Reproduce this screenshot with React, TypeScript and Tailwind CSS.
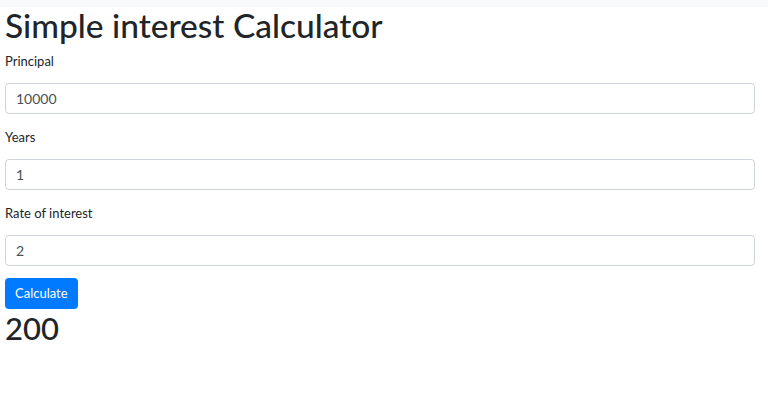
import React, { useState } from 'react';

const fields = [
  { key: 'principal', label: 'Principal' },
  { key: 'years', label: 'Years' },
  { key: 'rate', label: 'Rate of interest' },
] as const;

type Key = (typeof fields)[number]['key'];

const App = () => {
  const [values, setValues] = useState<Record<Key, string>>({
    principal: '10000',
    years: '1',
    rate: '2',
  });
  const [result, setResult] = useState<number | null>(200);

  const calculate = () => {
    const p = parseFloat(values.principal) || 0;
    const n = parseFloat(values.years) || 0;
    const r = parseFloat(values.rate) || 0;
    setResult((p * n * r) / 100);
  };

  return (
    <div className="min-h-screen bg-white text-[#212529]" style={{ fontFamily: 'Lato, "Open Sans", sans-serif' }}>
      <div className="h-[7px] bg-[#f8f9fa]" />
      <div className="pl-[5px] pr-[13px]">
        <h1 className="text-[33.5px] leading-[36px] font-medium mb-2">Simple interest Calculator</h1>

        {fields.map((f) => (
          <div key={f.key} className="mb-[13px]">
            <label className="block text-[13px] leading-[20px] mb-[12px]">{f.label}</label>
            <input
              type="text"
              value={values[f.key]}
              onChange={(e) => setValues({ ...values, [f.key]: e.target.value })}
              className="block w-full h-[31px] px-[10px] text-[14px] text-[#495057] border border-[#ced4da] rounded-[4px] outline-none"
            />
          </div>
        ))}

        <button
          onClick={calculate}
          className="-mt-px h-[31px] px-[10px] text-[13px] text-white bg-[#007bff] rounded-[4px]"
        >
          Calculate
        </button>

        {result !== null && (
          <h2 className="mt-[1px] text-[31px] leading-[36px] font-medium">{result}</h2>
        )}
      </div>
    </div>
  );
};

export default App;
